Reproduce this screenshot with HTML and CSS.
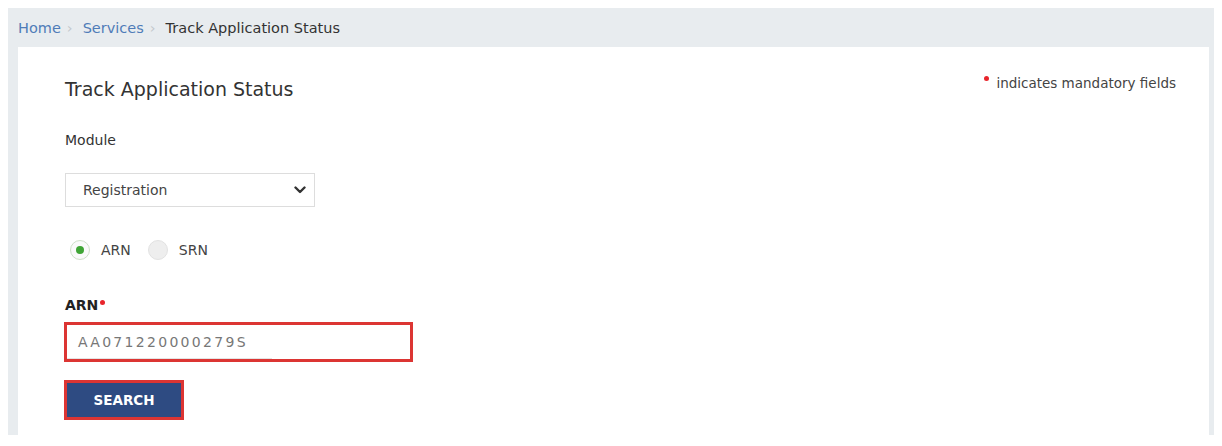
FILE: index.html
```html
<!DOCTYPE html>
<html lang="en">
<head>
    <meta charset="UTF-8">
    <meta name="viewport" content="width=device-width, initial-scale=1.0">
    <title>Track Application Status</title>
    <link rel="stylesheet" href="styles.css">
</head>
<body>
    <div class="page">
        <div class="breadcrumb">
            <a href="#" class="crumb">Home</a>
            <span class="sep">&rsaquo;</span>
            <a href="#" class="crumb">Services</a>
            <span class="sep">&rsaquo;</span>
            <span class="current">Track Application Status</span>
        </div>
        <div class="card">
            <div class="card-head">
                <h2 class="title">Track Application Status</h2>
                <div class="mandatory"><span class="dot"></span>indicates mandatory fields</div>
            </div>

            <label class="label">Module</label>
            <div class="select-box">
                <span>Registration</span>
                <svg class="chevron" width="12" height="8" viewBox="0 0 12 8">
                    <path d="M1.5 1.5 L6 6 L10.5 1.5" fill="none" stroke="#333" stroke-width="2.4" stroke-linecap="round" stroke-linejoin="round"/>
                </svg>
            </div>

            <div class="radios">
                <label class="radio"><span class="circle checked"></span>ARN</label>
                <label class="radio"><span class="circle"></span>SRN</label>
            </div>

            <label class="label strong">ARN<span class="req"></span></label>
            <div class="input-box">AA071220000279S</div>

            <button class="search">SEARCH</button>
        </div>
    </div>
</body>
</html>
```

FILE: styles.css
```css
body {
    font-family: "DejaVu Sans", Verdana, sans-serif;
    margin: 8px;
    background: #fff;
    color: #333;
}
.page {
    background-color: #e8ecef;
    padding: 0 5px 0 10px;
    height: 427px;
    display: flex;
    flex-direction: column;
}
.breadcrumb {
    height: 39px;
    display: flex;
    align-items: center;
    font-size: 14.5px;
    padding-top: 1px;
    box-sizing: border-box;
}
.crumb {
    color: #4f7cb8;
    text-decoration: none;
}
.sep {
    color: #c3c8cc;
    margin: 0 10px 0 6px;
}
.current {
    color: #333;
}
.card {
    flex: 1;
    background: white;
    padding: 0 33px 0 47px;
}
.card-head {
    display: flex;
    justify-content: space-between;
    align-items: flex-start;
}
.title {
    font-size: 19px;
    font-weight: normal;
    color: #333;
    margin: 31px 0 0 0;
}
.mandatory {
    margin-top: 28px;
    font-size: 13.5px;
    color: #444;
    display: flex;
    align-items: flex-start;
}
.dot, .req {
    display: inline-block;
    width: 5px;
    height: 5px;
    border-radius: 50%;
    background: #e8242b;
    margin-right: 7px;
    margin-top: 1px;
}
.label {
    display: block;
    font-size: 14px;
    color: #333;
    margin-top: 32px;
}
.strong {
    font-weight: bold;
    color: #222;
    margin-top: 37px;
    display: flex;
    align-items: flex-start;
}
.req {
    margin: 3px 0 0 2px;
}
.select-box {
    width: 250px;
    height: 34px;
    margin-top: 25px;
    border: 1px solid #ddd;
    box-sizing: border-box;
    display: flex;
    align-items: center;
    justify-content: space-between;
    padding: 0 8px 0 17px;
    font-size: 14px;
    color: #444;
}
.radios {
    display: flex;
    gap: 17px;
    margin-top: 33px;
    margin-left: 5px;
}
.radio {
    display: flex;
    align-items: center;
    font-size: 14px;
    color: #444;
}
.circle {
    width: 20px;
    height: 20px;
    border-radius: 50%;
    background: #eeeeee;
    border: 1px solid #e2e2e2;
    box-sizing: border-box;
    margin-right: 11px;
    position: relative;
}
.circle.checked {
    background: #fafafa;
    border: 1px solid #cfe0c9;
}
.circle.checked::after {
    content: "";
    position: absolute;
    left: 5px;
    top: 5px;
    width: 8px;
    height: 8px;
    border-radius: 50%;
    background: #3fa535;
}
.input-box {
    width: 349px;
    height: 40px;
    margin: 9px 0 0 -1px;
    border: 3px solid #dc3533;
    box-sizing: border-box;
    display: flex;
    align-items: center;
    padding-left: 11px;
    font-size: 14px;
    letter-spacing: 2.3px;
    color: #777;
    position: relative;
}
.input-box::after {
    content: "";
    position: absolute;
    left: 0;
    bottom: 0;
    width: 205px;
    height: 1px;
    background: #e4e4e4;
}
.search {
    display: block;
    width: 120px;
    height: 40px;
    margin: 18px 0 0 -1px;
    background: #2e4b82;
    border: 3px solid #dc3533;
    color: white;
    font-family: "DejaVu Sans", Verdana, sans-serif;
    font-size: 13.5px;
    font-weight: bold;
}
```
